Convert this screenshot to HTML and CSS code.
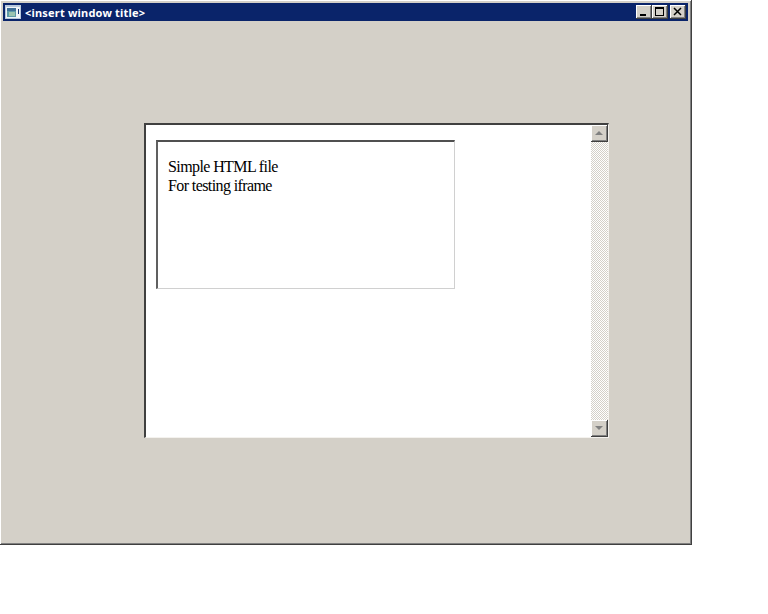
FILE: index.html
```html
<!DOCTYPE html>
<html lang="en">
<head>
  <meta charset="UTF-8">
  <title>&lt;insert window title&gt;</title>
  <link rel="stylesheet" href="styles.css">
</head>
<body>

  <div class="window">
    <div class="titlebar">
      <svg class="app-icon" width="16" height="14" viewBox="0 0 16 14">
        <rect width="16" height="14" fill="#b8c8dc"/>
        <rect x="1" y="2" width="14" height="11" fill="#f0f4f8"/>
        <rect x="2" y="3" width="9" height="9" fill="#5f9aa8"/>
        <rect x="2" y="3" width="9" height="3" fill="#3f6f98"/>
        <rect x="4" y="7" width="6" height="4" fill="#9cc4b0"/>
        <rect x="13" y="4" width="1" height="5" fill="#14306e"/>
      </svg>
      <span class="title">&lt;insert window title&gt;</span>
      <div class="controls">
        <div class="ctl">
          <svg width="9" height="9" viewBox="0 0 9 9"><rect x="1" y="7" width="6" height="2" fill="#000"/></svg>
        </div>
        <div class="ctl">
          <svg width="9" height="9" viewBox="0 0 9 9"><path d="M0 0h9v9h-9z M1 2v6h7v-6z" fill="#000" fill-rule="evenodd"/></svg>
        </div>
        <div class="ctl ctl-close">
          <svg width="9" height="9" viewBox="0 0 9 9"><path d="M1 1l7 7M8 1l-7 7" stroke="#000" stroke-width="1.5"/></svg>
        </div>
      </div>
    </div>

    <div class="outer-frame">
      <div class="frame-body">
        <div class="inner-frame">
          <p>Simple HTML file<br>For testing iframe</p>
        </div>
      </div>
      <div class="scrollbar">
        <div class="sb-btn"><span class="arrow-up"></span></div>
        <div class="sb-track"></div>
        <div class="sb-btn"><span class="arrow-down"></span></div>
      </div>
    </div>
  </div>

</body>
</html>
```

FILE: styles.css
```css
* {
  margin: 0;
  padding: 0;
  box-sizing: border-box;
}

body {
  background-color: #fff;
  height: 100vh;
  overflow: hidden;
}

.window {
  width: 692px;
  height: 545px;
  padding: 3px 3px 0 3px;
  background-color: #d4d0c8;
  border-right: 1px solid #404040;
  border-bottom: 1px solid #404040;
  box-shadow: inset 1px 1px 0 #fff, inset -1px -1px 0 #808080;
}

.titlebar {
  height: 18px;
  background-color: #0a246a;
  display: flex;
  align-items: center;
  padding-left: 2px;
  padding-right: 2px;
}

.app-icon {
  flex: none;
}

.title {
  margin-left: 4px;
  font-family: "Noto Sans", sans-serif;
  font-size: 11px;
  font-weight: bold;
  letter-spacing: 0.2px;
  color: #fff;
}

.controls {
  margin-left: auto;
  display: flex;
}

.ctl {
  width: 16px;
  height: 14px;
  background-color: #d4d0c8;
  border-right: 1px solid #404040;
  border-bottom: 1px solid #404040;
  box-shadow: inset 1px 1px 0 #fff, inset -1px -1px 0 #808080;
  display: flex;
  align-items: center;
  justify-content: center;
}

.ctl-close {
  margin-left: 2px;
}

.outer-frame {
  width: 465px;
  height: 315px;
  margin: 102px 0 0 141px;
  display: flex;
  background-color: #fff;
  border-top: 2px solid #404040;
  border-left: 2px solid #404040;
  border-right: 1px solid #f4f2ee;
  border-bottom: 1px solid #f4f2ee;
}

.frame-body {
  flex: 1;
  padding: 15px 0 0 10px;
}

.inner-frame {
  width: 299px;
  height: 149px;
  background-color: #fff;
  border-top: 2px solid #505050;
  border-left: 2px solid #606060;
  border-right: 1px solid #d0d0d0;
  border-bottom: 1px solid #d0d0d0;
  padding: 15px 0 0 10px;
  font-family: "Liberation Serif", serif;
  font-size: 16px;
  line-height: 19px;
  letter-spacing: -0.6px;
  color: #000;
}

.scrollbar {
  width: 17px;
  display: flex;
  flex-direction: column;
}

.sb-track {
  flex: 1;
  background-color: #eeece8;
  background-image: repeating-conic-gradient(#d4d0c8 0 25%, #fff 0 50%);
  background-size: 2px 2px;
}

.sb-btn {
  height: 17px;
  background-color: #d4d0c8;
  border-right: 1px solid #404040;
  border-bottom: 1px solid #404040;
  box-shadow: inset 1px 1px 0 #fff, inset -1px -1px 0 #808080;
  display: flex;
  align-items: center;
  justify-content: center;
}

.arrow-up {
  width: 0;
  height: 0;
  border-left: 4px solid transparent;
  border-right: 4px solid transparent;
  border-bottom: 4px solid #808080;
}

.arrow-down {
  width: 0;
  height: 0;
  border-left: 4px solid transparent;
  border-right: 4px solid transparent;
  border-top: 4px solid #808080;
}
```
